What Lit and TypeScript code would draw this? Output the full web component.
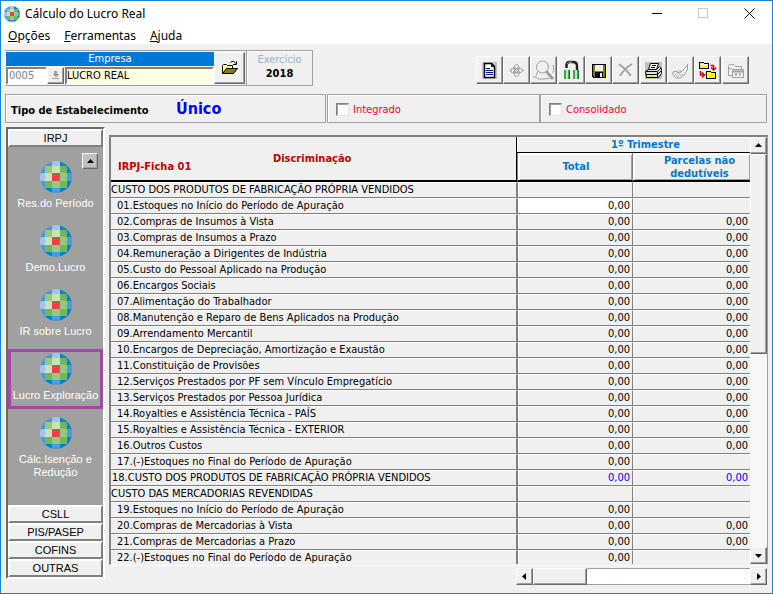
import { LitElement, html, svg, css } from "lit";
import { customElement, property } from "lit/decorators.js";
import { classMap } from "lit/directives/class-map.js";

type Row = { text: string; total?: string; part?: string; kind?: "group" | "sum" };

const Z = "0,00";
const ROWS: Row[] = [
  { text: "CUSTO DOS PRODUTOS DE FABRICAÇÃO PRÓPRIA VENDIDOS", kind: "group" },
  { text: "01.Estoques no Início do Período de Apuração", total: Z },
  { text: "02.Compras de Insumos à Vista", total: Z, part: Z },
  { text: "03.Compras de Insumos a Prazo", total: Z, part: Z },
  { text: "04.Remuneração a Dirigentes de Indústria", total: Z, part: Z },
  { text: "05.Custo do Pessoal Aplicado na Produção", total: Z, part: Z },
  { text: "06.Encargos Sociais", total: Z, part: Z },
  { text: "07.Alimentação do Trabalhador", total: Z, part: Z },
  { text: "08.Manutenção e Reparo de Bens Aplicados na Produção", total: Z, part: Z },
  { text: "09.Arrendamento Mercantil", total: Z, part: Z },
  { text: "10.Encargos de Depreciação, Amortização e Exaustão", total: Z, part: Z },
  { text: "11.Constituição de Provisões", total: Z, part: Z },
  { text: "12.Serviços Prestados por PF sem Vínculo Empregatício", total: Z, part: Z },
  { text: "13.Serviços Prestados por Pessoa Jurídica", total: Z, part: Z },
  { text: "14.Royalties e Assistência Técnica - PAÍS", total: Z, part: Z },
  { text: "15.Royalties e Assistência Técnica - EXTERIOR", total: Z, part: Z },
  { text: "16.Outros Custos", total: Z, part: Z },
  { text: "17.(-)Estoques no Final do Período de Apuração", total: Z },
  { text: "18.CUSTO DOS PRODUTOS DE FABRICAÇÃO PRÓPRIA VENDIDOS", total: Z, part: Z, kind: "sum" },
  { text: "CUSTO DAS MERCADORIAS REVENDIDAS", kind: "group" },
  { text: "19.Estoques no Início do Período de Apuração", total: Z },
  { text: "20.Compras de Mercadorias à Vista", total: Z, part: Z },
  { text: "21.Compras de Mercadorias a Prazo", total: Z, part: Z },
  { text: "22.(-)Estoques no Final do Período de Apuração", total: Z },
];

const GLOBE = [
  ["#4a9bdb", "#4a9bdb", "#a3c4ea", "#0a82cc", "#0a82cc"],
  ["#4a9bdb", "#96c885", "#c8e0bc", "#70b75f", "#0a82cc"],
  ["#a3c4ea", "#c8e0bc", "#e84448", "#96c885", "#4a9bdb"],
  ["#4a9bdb", "#70b75f", "#96c885", "#70b75f", "#0a82cc"],
  ["#0a82cc", "#0a82cc", "#4a9bdb", "#0a82cc", "#0a82cc"],
];
const STOPS = [0, 5, 12, 20, 27, 32];

const globe = (size: number) => html`
  <svg width=${size} height=${size} viewBox="0 0 32 32" aria-hidden="true">
    <defs><clipPath id="disc"><circle cx="16" cy="16" r="16" /></clipPath></defs>
    <g clip-path="url(#disc)" shape-rendering="crispEdges">
      ${GLOBE.map((r, y) =>
        r.map(
          (c, x) => svg`<rect x=${STOPS[x]} y=${STOPS[y]} width=${STOPS[x + 1] - STOPS[x]}
            height=${STOPS[y + 1] - STOPS[y]} fill=${c} />`
        )
      )}
    </g>
  </svg>`;

const ICONS: Record<string, unknown> = {
  page: svg`<rect x="4" y="3" width="15" height="17" fill="#c0c0c0"/>
    <path d="M6.500 4.500h7l3 3v11h-10z" fill="#fff" stroke="#000" stroke-width="1.500"/><path d="M13.500 4.500v3h3" fill="none" stroke="#000"/>
    <path d="M8 9.500h4M8 11.500h7M8 13.500h7M8 15.500h7" stroke="#000080"/>`,
  atom: svg`<g fill="none" stroke="#a0a0a0"><circle cx="11.500" cy="11.500" r="2"/><circle cx="11.500" cy="7.500" r="2"/><circle cx="11.500" cy="15.500" r="2"/>
    <circle cx="7.500" cy="11.500" r="2"/><circle cx="15.500" cy="11.500" r="2"/><path d="M8 8l7 7M15 8l-7 7M4.500 11.500h2M17 11.500h2"/></g>`,
  search: svg`<g fill="none" stroke="#a0a0a0"><circle cx="10.500" cy="8" r="6"/><path d="M6 12l-2 5M1 18h3l2 2h7l5-1h4M21 6l1 5-2 3"/></g>
    <path d="M14 12l7 8" stroke="#a0a0a0" stroke-width="3"/><path d="M16 11l6 7" stroke="#fff"/>`,
  lock: svg`<path d="M6.500 9V6Q6.500 3 10 3h3q4 0 4 4v4" fill="none" stroke="#222" stroke-width="2.500"/><path d="M7 5q1-2 5-2" fill="none" stroke="#aaa"/>
    <rect x="4" y="11" width="6" height="9" fill="#3fa650"/><rect x="6" y="11" width="2" height="9" fill="#b5ecb8"/><rect x="9" y="11" width="1" height="9" fill="#14702a"/>
    <rect x="13" y="11" width="6" height="9" fill="#3fa650"/><rect x="15" y="11" width="2" height="9" fill="#b5ecb8"/><rect x="18" y="11" width="1" height="9" fill="#14702a"/>`,
  save: svg`<g shape-rendering="crispEdges"><path d="M5 5h14v14H6l-1-1z" fill="#000"/><path d="M6 6h2v6h8V6h2v12H7l-1-1z" fill="#808000"/>
    <rect x="8" y="6" width="8" height="6" fill="#efefef"/><rect x="8" y="13" width="8" height="5" fill="#000"/><rect x="13" y="14" width="2" height="4" fill="#efefef"/></g>`,
  cut: svg`<path d="M6 6l12 12M18 6L7 18" stroke="#fff" stroke-width="2"/><path d="M5 5q7 5 12 12M18 5Q11 9 6 17" fill="none" stroke="#a0a0a0" stroke-width="2"/>`,
  print: svg`<rect x="3" y="3" width="17" height="17" fill="#c0c0c0"/><path d="M8.500 4.500h8l-2 6h-8z" fill="#fff" stroke="#000"/><path d="M10 6.500h4M9 8.500h4" stroke="#000"/>
    <path d="M3.500 12.500l3-2h8l3-3 2 2v5l-3 4h-12z" fill="#e0e0e0" stroke="#000"/><path d="M4 12.500h11.500v6M16 12l3-3M4 15.500h11M16 15l3-3" stroke="#000" fill="none"/><path d="M8 17.500h4" stroke="#d8d800"/>`,
  pen: svg`<g fill="none" stroke="#a0a0a0"><path d="M18.500 5v6l-4 6-3 2H7l-3-3v-3l4-1 1 3M9 14l3-1 6-6M6 15l3 3M10 15q1 3 4 0M11 11v3"/></g><path d="M19.500 7v5l-4 6" stroke="#fff" fill="none"/>`,
  swap: svg`<g shape-rendering="crispEdges"><path d="M3 3h5v1h5v6H3z" fill="#000"/><path d="M4 4h4v1h4v4H4z" fill="#ffff00"/><path d="M4 5h7v1H4z" fill="#fff"/>
    <path d="M10 12h5v1h5v7H10z" fill="#000"/><path d="M11 13h4v1h4v5h-8z" fill="#ffff00"/><path d="M11 14h7v1h-7z" fill="#fff"/></g>
    <path d="M14.500 6.500h3v4M15 8.500l2.500 2.500L20 8.500M4.500 12v4h3M6 13.500l2.500 2.500L6 18.500" fill="none" stroke="#e00000" stroke-width="1.500"/>`,
  tree: svg`<g fill="none" stroke="#a0a0a0"><path d="M8 16.500H4.500v-10l1-1h4l2 2h6v3M4.500 9.500h3"/><rect x="8.500" y="10.500" width="11" height="8"/><path d="M8 12.500h11M11 15.500h2M15 15.500h2" stroke-width="2"/></g>`,
};

const tri = (dir: string) => {
  const d: Record<string, string> = {
    up: "M0 5h7L3.500 1z", down: "M0 2h7L3.500 6z", left: "M5 0v7L1 3.500z", right: "M2 0v7L6 3.500z",
  };
  return html`<svg width="7" height="7" viewBox="0 0 7 7" aria-hidden="true"><path d=${d[dir]} fill="#000" /></svg>`;
};

const shared = css`
  :host { display: block; box-sizing: border-box; }
  *, *::before, *::after { box-sizing: border-box; }
  svg { display: block; flex: none; }
  button { font: inherit; color: inherit; margin: 0; padding: 0; display: flex; align-items: center; justify-content: center; }
  .raised {
    background: #f0f0f0; border: 1px solid; border-color: #fff #696969 #696969 #fff;
    box-shadow: inset -1px -1px #a0a0a0;
  }
`;

@customElement("side-menu")
class SideMenu extends LitElement {
  static styles = [shared, css`
    :host {
      font: 11px/13px "Liberation Sans", Arial, sans-serif; display: flex; flex-direction: column;
      border: 2px solid; border-color: #696969 #fff #fff #696969; background: #a0a0a0;
    }
    .tab { height: 18px; flex: none; width: 100%; border-width: 2px; border-color: #fff #808080 #808080 #fff; box-shadow: none; }
    .list { flex: 1; position: relative; display: flex; flex-direction: column; padding-top: 10px; }
    .item { background: none; border: 3px solid transparent; width: 100%; height: 60px; color: #fff; flex-direction: column; justify-content: flex-start; padding-top: 1px; margin-bottom: 4px; white-space: nowrap; }
    .item.tall { white-space: normal; height: 72px; }
    .item.on { border-color: #a349a4; }
    .item span { margin-top: 4px; }
    .up { position: absolute; top: 6px; right: 5px; width: 16px; height: 16px; background: #c0c0c0; z-index: 1; }
  `];
  render() {
    const items = ["Res.do Período", "Demo.Lucro", "IR sobre Lucro", "Lucro Exploração", "Cálc.Isenção e Redução"];
    return html`
      <button class="tab raised">IRPJ</button>
      <div class="list">
        <button class="up raised" aria-label="Rolar para cima">${tri("up")}</button>
        ${items.map((t, i) => html`
          <button class=${classMap({ item: true, on: i === 3, tall: i === 4 })}>${globe(32)}<span>${t}</span></button>`)}
      </div>
      ${["CSLL", "PIS/PASEP", "COFINS", "OUTRAS"].map((t) => html`<button class="tab raised">${t}</button>`)}
    `;
  }
}

@customElement("scroll-bar")
class ScrollBar extends LitElement {
  @property({ reflect: true }) axis = "y";
  static styles = [shared, css`
    :host { display: flex; flex-direction: column; width: 17px; background: #f8f8f8; }
    :host([axis="x"]) { flex-direction: row; width: auto; height: 17px; background: #fff; border-bottom: 1px solid #a0a0a0; border-top: 1px solid #a0a0a0; }
    .arrow { width: 17px; height: 17px; flex: none; }
    :host([axis="x"]) .arrow, :host([axis="x"]) .thumb { margin-top: -1px; height: 17px; }
    .thumb { height: 200px; }
    :host([axis="x"]) .thumb { width: 54px; }
    .gap { flex: 1; }
  `];
  render() {
    const y = this.axis === "y";
    return html`
      <button class="arrow raised" aria-label="Anterior">${tri(y ? "up" : "left")}</button>
      <div class="thumb raised"></div>
      <div class="gap"></div>
      <button class="arrow raised" aria-label="Próximo">${tri(y ? "down" : "right")}</button>
    `;
  }
}

@customElement("cost-sheet")
class CostSheet extends LitElement {
  static styles = [shared, css`
    .frame { display: flex; border: 2px solid; border-color: #808080 #f0f0f0 #f0f0f0 #808080; border-right-color: #a0a0a0; border-width: 2px 1px 1px 2px; }
    table { flex: 1; width: 0; table-layout: fixed; border-collapse: separate; border-spacing: 0; }
    .c1 { width: auto; }
    .c2 { width: 116px; }
    .c3 { width: 117px; }
    th { font-weight: bold; padding: 0; border: 0 solid #000; color: #0078d7; line-height: 13px; }
    .desc { color: #c00000; text-align: left; border-right-width: 1px; border-bottom-width: 2px; vertical-align: top; }
    .titles { display: flex; align-items: flex-start; padding: 15px 0 0 7px; height: 42px; }
    .titles .ficha { padding-top: 8px; width: 155px; }
    .quarter { height: 16px; border-bottom-width: 1px; box-shadow: inset 1px 1px #fff; padding-left: 24px; }
    .sub { height: 29px; border-bottom-width: 2px; box-shadow: inset 2px 2px #fff, inset -1px -1px #a0a0a0; padding-left: 16px; }
    .sub.total { border-right: 1px solid #808080; border-left: 1px solid #808080; padding-left: 2px; }
    tbody td, tbody th {
      height: 16px; padding: 0 3px 0 6px; line-height: 14px; font-weight: normal; color: #000; text-align: left;
      border: 0 solid #808080; border-bottom-width: 1px; border-right-width: 1px; border-top: 1px solid #fff; white-space: nowrap;
    }
    tbody .num { text-align: right; padding: 0 2px 0 0; }
    tbody .t { border-left-width: 1px; box-shadow: inset 1px 0 #fff; }
    tbody .p { border-right-width: 0; box-shadow: inset 1px 0 #fff; }
    tbody .group th { padding-left: 0; }
    tbody .sum th { padding-left: 1px; }
    .sum .num { color: #0000ff; }
    .active { background: #fff; }
    tbody tr:last-child > * { height: 14px; line-height: 13px; border-bottom-width: 0; }
    scroll-bar { flex: none; }
    .foot { display: flex; justify-content: flex-end; border-top: 1px solid #fff; padding: 2px 1px 0 0; }
    .foot scroll-bar { width: 251px; }
  `];
  render() {
    return html`
      <div class="frame">
        <table>
          <colgroup><col class="c1" /><col class="c2" /><col class="c3" /></colgroup>
          <thead>
            <tr>
              <th class="desc" rowspan="2" scope="col"><div class="titles"><span class="ficha">IRPJ-Ficha 01</span><span>Discriminação</span></div></th>
              <th class="quarter" colspan="2" scope="colgroup">1º Trimestre</th>
            </tr>
            <tr>
              <th class="sub total" scope="col">Total</th>
              <th class="sub" scope="col">Parcelas não<br />dedutíveis</th>
            </tr>
          </thead>
          <tbody>
            ${ROWS.map((r, i) => html`
              <tr class=${r.kind ?? "line"}>
                <th scope="row">${r.text}</th>
                <td class=${classMap({ num: true, t: true, active: i === 1 })}>${r.total ?? ""}</td>
                <td class="num p">${r.part ?? ""}</td>
              </tr>`)}
          </tbody>
        </table>
        <scroll-bar axis="y"></scroll-bar>
      </div>
      <div class="foot"><scroll-bar axis="x"></scroll-bar></div>
    `;
  }
}

@customElement("app-root")
class AppRoot extends LitElement {
  static styles = [shared, css`
    :host {
      min-height: 100vh; background: #f0f0f0; border: 1px solid #1883d7; color: #000;
      font: 11px/13px "DejaVu Sans Condensed", "DejaVu Sans", sans-serif; display: flex; flex-direction: column;
    }
    .top { background: #fff; font: 12px/16px "Noto Sans", sans-serif; height: 43px; }
    .title { display: flex; align-items: center; height: 25px; padding-left: 3px; }
    .title h1 { font: inherit; margin: 0; padding-left: 5px; flex: 1; }
    .win { background: none; border: 0; width: 46px; height: 24px; }
    .menu { display: flex; gap: 14px; padding-left: 7px; height: 18px; }
    .menu button { background: none; border: 0; }
    .menu button span { padding-top: 2px; }
    .bar { display: flex; align-items: flex-start; padding: 6px 23px 0 4px; height: 50px; }
    .company { border: 1px solid #a0a0a0; border-left-color: #fff; border-right: 0; display: flex; height: 36px; width: 241px; padding-top: 1px; }
    .fields { flex: 1; display: grid; grid-template-columns: 41px 18px 1fr; }
    .fields label { grid-column: 1 / -1; background: #0078d7; color: #fff; text-align: center; height: 14px; line-height: 14px; }
    input[type="text"] {
      font: inherit; width: 100%; height: 18px; padding: 0 0 0 1px; border: 2px solid; border-color: #808080 #fff #fff #808080; border-radius: 0; background: #fff; color: #000; min-width: 0;
    }
    input.code { color: #808080; }
    input.name { background: #ffffe1; padding: 0; }
    .drop { width: 17px; height: 17px; }
    .open { width: 31px; height: 32px; margin-right: 1px; }
    .year { border: 1px solid #a0a0a0; width: 67px; height: 36px; text-align: center; display: flex; flex-direction: column; box-shadow: inset 1px 1px #fff; }
    .year .cap { color: #99b4d1; line-height: 15px; padding-top: 1px; }
    .year b { line-height: 13px; }
    .tools { display: flex; margin: 6px 0 0 auto; gap: 1px; }
    .set { display: flex; }
    .set button { width: 27px; height: 28px; }
    .kinds { display: grid; grid-template-columns: 322px 213px 1fr; padding: 0 5px 0 4px; height: 29px; }
    .panel { border: 1px solid #a0a0a0; display: flex; align-items: center; padding-left: 5px; box-shadow: inset 1px 1px #fff; height: 29px; }
    .panel.first { margin-right: 1px; font-weight: bold; }
    .panel.check { padding-left: 8px; }
    .panel label { color: #ff0033; display: flex; align-items: center; gap: 4px; padding-top: 2px; }
    .first .k { padding-top: 4px; width: 165px; }
    .unique { font-size: 16px; line-height: 20px; color: #0000ff; }
    input[type="checkbox"] { appearance: none; width: 13px; height: 13px; margin: 0; background: #fff; border: 1px solid; border-color: #808080 #e3e3e3 #e3e3e3 #808080; box-shadow: inset 1px 1px #a0a0a0; }
    .main { display: flex; align-items: flex-start; gap: 4px; padding: 4px 4px 0 5px; }
    side-menu { width: 99px; flex: none; min-height: 452px; }
    cost-sheet { flex: 1; margin-top: 8px; min-width: 0; }
  `];

  tool(name: string, label: string) {
    return html`<button class="raised" aria-label=${label}><svg width="23" height="23" viewBox="0 0 23 23" aria-hidden="true">${ICONS[name]}</svg></button>`;
  }

  render() {
    return html`
      <header class="top">
        <div class="title">
          ${globe(16)}
          <h1>Cálculo do Lucro Real</h1>
          <button class="win" aria-label="Minimizar"><svg width="11" height="11"><path d="M0 5.500h10" stroke="#000" /></svg></button>
          <button class="win" aria-label="Maximizar" disabled><svg width="11" height="11"><rect x="0.500" y="0.500" width="9" height="9" fill="none" stroke="#c8c8c8" /></svg></button>
          <button class="win" aria-label="Fechar"><svg width="11" height="11"><path d="M0.500 0.500l10 10M10.500 0.500l-10 10" stroke="#000" /></svg></button>
        </div>
        <nav class="menu">
          <button><span><u>O</u>pções</span></button>
          <button><span><u>F</u>erramentas</span></button>
          <button><span><u>A</u>juda</span></button>
        </nav>
      </header>
      <section class="bar">
        <div class="company">
          <div class="fields">
            <label for="name">Empresa</label>
            <input class="code" type="text" value="0005" aria-label="Código" disabled />
            <button class="drop raised" aria-label="Escolher empresa"><svg width="9" height="9" viewBox="0 0 9 9" shape-rendering="crispEdges"><path d="M3 0h3v3h2L4.500 6.500 1 3h2zM1 7h7v1H1z" fill="#a0a0a0" /></svg></button>
            <input id="name" class="name" type="text" value="LUCRO REAL" />
          </div>
          <button class="open raised" aria-label="Abrir">
            <svg width="18" height="16" viewBox="0 0 18 16">
              <path d="M1.500 13.500v-8l1-1h3l1 1h5v3" fill="#ffff80" stroke="#000" />
              <path d="M1.500 13.500l4-5h11l-4 5z" fill="#808000" stroke="#000" />
              <path d="M9.500 2.500q3-3 5 1M15.500 1v3.500H12" fill="none" stroke="#000" />
            </svg>
          </button>
        </div>
        <div class="year"><span class="cap">Exercício</span><b>2018</b></div>
        <div class="tools">
          <div class="set">${this.tool("page", "Novo")}${this.tool("atom", "Processar")}${this.tool("search", "Pesquisar")}</div>
          <div class="set">${this.tool("lock", "Desbloquear")}${this.tool("save", "Salvar")}${this.tool("cut", "Excluir")}</div>
          <div class="set">${this.tool("print", "Imprimir")}${this.tool("pen", "Editar")}${this.tool("swap", "Copiar")}</div>
          <div class="set">${this.tool("tree", "Pastas")}</div>
        </div>
      </section>
      <section class="kinds">
        <div class="panel first"><span class="k">Tipo de Estabelecimento</span><span class="unique">Único</span></div>
        <div class="panel check"><label><input type="checkbox" />Integrado</label></div>
        <div class="panel check"><label><input type="checkbox" />Consolidado</label></div>
      </section>
      <main class="main">
        <side-menu></side-menu>
        <cost-sheet></cost-sheet>
      </main>
    `;
  }
}
